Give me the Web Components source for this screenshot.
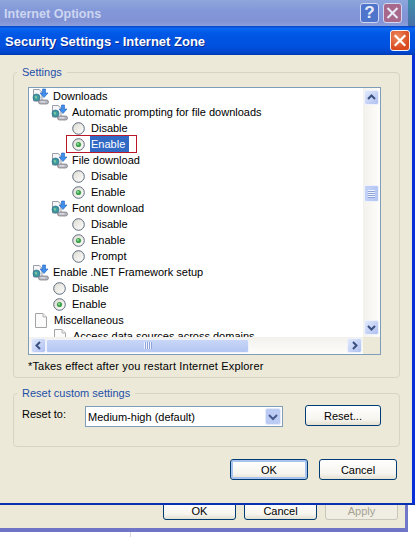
<!DOCTYPE html>
<html lang="en">
<head>
<meta charset="utf-8">
<title>Security Settings</title>
<style>
html,body{margin:0;padding:0;background:#fff;overflow:hidden}
body{width:415px;height:537px;font:11px/16px "Liberation Sans",Arial,sans-serif;color:#000}
</style>
</head>
<body>
<xp-desktop>
  <xp-back-window title="Internet Options" slot="back">
    <xp-button w="73" h="19">OK</xp-button>
    <xp-button w="73" h="19">Cancel</xp-button>
    <xp-button w="73" h="19" disabled>Apply</xp-button>
  </xp-back-window>
  <xp-dialog title="Security Settings - Internet Zone" slot="front">
    <xp-group legend="Settings" style="height:306px">
      <xp-listbox>
        <xp-item kind="net" level="0">Downloads</xp-item>
        <xp-item kind="net" level="1">Automatic prompting for file downloads</xp-item>
        <xp-item kind="radio" level="2">Disable</xp-item>
        <xp-item kind="radio" level="2" checked selected>Enable</xp-item>
        <xp-item kind="net" level="1">File download</xp-item>
        <xp-item kind="radio" level="2">Disable</xp-item>
        <xp-item kind="radio" level="2" checked>Enable</xp-item>
        <xp-item kind="net" level="1">Font download</xp-item>
        <xp-item kind="radio" level="2">Disable</xp-item>
        <xp-item kind="radio" level="2" checked>Enable</xp-item>
        <xp-item kind="radio" level="2">Prompt</xp-item>
        <xp-item kind="net" level="0">Enable .NET Framework setup</xp-item>
        <xp-item kind="radio" level="1">Disable</xp-item>
        <xp-item kind="radio" level="1" checked>Enable</xp-item>
        <xp-item kind="doc" level="0">Miscellaneous</xp-item>
        <xp-item kind="doc" level="1">Access data sources across domains</xp-item>
      </xp-listbox>
      <xp-note>*Takes effect after you restart Internet Explorer</xp-note>
    </xp-group>
    <xp-group legend="Reset custom settings" style="height:54px;margin-top:15px">
      <xp-reset-row>
        <span>Reset to:</span>
        <xp-select>Medium-high (default)</xp-select>
        <xp-button w="76" h="21">Reset...</xp-button>
      </xp-reset-row>
    </xp-group>
    <xp-actions>
      <xp-button w="78" h="21" default>OK</xp-button>
      <xp-button w="78" h="21">Cancel</xp-button>
    </xp-actions>
  </xp-dialog>
</xp-desktop>
<script>
const def=(name,css,html)=>{
  customElements.define(name,class extends HTMLElement{
    constructor(){super();this.attachShadow({mode:'open'});}
    connectedCallback(){this.shadowRoot.innerHTML=`<style>${css}</style>${typeof html==='function'?html(this):html}`;}
  });
};
const attrTitle=el=>el.getAttribute('title')||'';

const closeGlyph=`<svg viewBox="0 0 20 20" width="100%" height="100%"><path d="M5 5 15 15M15 5 5 15" stroke="currentColor" stroke-width="2.4" stroke-linecap="square"/></svg>`;

def('xp-desktop',`
  :host{display:block;position:relative;width:415px;height:537px;background:#fff;overflow:hidden}
  .line{position:absolute;left:130px;top:532px;bottom:0;width:1px;background:#d8d8d8}
  .strip{position:absolute;right:0;top:0;width:7px;height:26px;background:linear-gradient(#3f8fa8,#4a6fa8)}
  .back{position:absolute;left:0;top:0}
  .front{position:absolute;left:0;top:26px}
`,`<div class="strip"></div><div class="line"></div>
   <div class="back"><slot name="back"></slot></div>
   <div class="front"><slot name="front"></slot></div>`);

def('xp-back-window',`
  :host{display:flex;flex-direction:column;width:408px;height:532px;box-sizing:border-box;background:#ece9d8;border-right:3px solid #6f78c8;border-bottom:4px solid #6f74c6}
  .bar{flex:none;height:26px;margin-right:-3px;display:flex;align-items:center;padding:0 6px 0 4px;box-sizing:border-box;gap:4px;
    background:linear-gradient(#8fa6dc 0,#8398d8 40%,#8292d4 80%,#8ba0dc 100%);color:#cdd6f0;font:bold 12.6px "Liberation Sans",sans-serif}
  .t{flex:1;padding-top:2px}
  .b{width:19px;height:20px;box-sizing:border-box;border:1px solid #cfd8f0;border-radius:3px;color:#e8ecf8}
  .h{background:#4f74cc;font:bold 17px/18px "Liberation Sans",sans-serif;text-align:center}
  .x{background:#a8688c;padding:0}
  .foot{flex:1;display:flex;justify-content:flex-end;align-items:flex-end;gap:8px;padding:0 7px 8px 0}
`,el=>`<div class="bar"><span class="t">${attrTitle(el)}</span><span class="b h">?</span><span class="b x">${closeGlyph}</span></div>
  <div class="foot"><slot></slot></div>`);

def('xp-dialog',`
  :host{display:flex;flex-direction:column;width:415px;height:479px;box-sizing:border-box;background:#ece9d8;border-right:3px solid #0831d9;border-bottom:2px solid #0831b0}
  .bar{flex:none;height:29px;display:flex;align-items:center;padding:0 5px 0 5px;margin-right:-3px;box-sizing:border-box;
    background:linear-gradient(#0a3fc0 0,#0a68f0 8%,#0058e6 25%,#0050de 70%,#0046cc 92%,#0038b0 100%);color:#fff;font:bold 13px "Liberation Sans",sans-serif;text-shadow:1px 1px 0 #0a2a90}
  .t{flex:1;padding-top:1px}
  .x{width:20px;height:21px;box-sizing:border-box;border:1px solid #f4f4f4;border-radius:3px;background:radial-gradient(circle at 35% 30%,#ee8a60,#d9491f 70%);color:#fff}
  .body{flex:1;display:flex;flex-direction:column;padding:17px 12px 0 13px}
`,el=>`<div class="bar"><span class="t">${attrTitle(el)}</span><span class="x">${closeGlyph}</span></div>
  <div class="body"><slot></slot></div>`);

def('xp-group',`
  :host{display:block;position:relative;box-sizing:border-box;border:1px solid #d8d4c2;border-radius:4px;flex:none}
  .legend{position:absolute;left:3px;top:-9px;background:#ece9d8;padding:0 5px;color:#1d4fa8;line-height:16px}
  .c{height:100%;display:flex;flex-direction:column;box-sizing:border-box;padding:14px 18px 0 14px}
`,el=>`<div class="legend">${el.getAttribute('legend')}</div><div class="c"><slot></slot></div>`);

const sbBtn=(d)=>`<svg width="15" height="15" viewBox="0 0 15 15"><defs><linearGradient id="g" x1="0" y1="0" x2="1" y2="1"><stop offset="0" stop-color="#e2eafc"/><stop offset="1" stop-color="#aebff0"/></linearGradient></defs><rect x=".5" y=".5" width="14" height="14" rx="2" fill="url(#g)" stroke="#eef2fd"/><path d="${d}" fill="none" stroke="#3a5080" stroke-width="2"/></svg>`;

def('xp-listbox',`
  :host{display:grid;grid-template-columns:1fr 17px;grid-template-rows:1fr 17px;height:268px;box-sizing:border-box;border:1px solid #7f9db9;background:#fff;flex:none}
  .list{overflow:hidden;min-width:0;background:#fff}
  .v{background:linear-gradient(90deg,#f3f1ec,#fdfdfb);display:flex;flex-direction:column;align-items:center;padding:2px 0;box-sizing:border-box}
  .h{background:linear-gradient(#f3f1ec,#fdfdfb);display:flex;align-items:center;padding:0 1px 0 2px;box-sizing:border-box;overflow:hidden}
  .corner{background:#ece9d8}
  .thumbV{margin-top:80px;width:15px;height:17px;box-sizing:border-box;border:1px solid #eef2fd;border-radius:2px;background:linear-gradient(90deg,#c4d2f6,#b4c6f2);display:flex;flex-direction:column;justify-content:center;align-items:center;gap:1px}
  .thumbV i{display:block;width:7px;height:1px;background:#eef2fd;box-shadow:0 1px 0 #8ea4d8}
  .thumbH{width:203px;height:14px;box-sizing:border-box;border:1px solid #eef2fd;border-radius:2px;background:linear-gradient(#c8d6f8,#b4c6f2);display:flex;justify-content:center;align-items:center;gap:1px}
  .thumbH i{display:block;width:1px;height:7px;background:#eef2fd;box-shadow:1px 0 0 #8ea4d8}
  .sp{flex:1}
  svg{flex:none}
`,`<div class="list"><slot></slot></div>
  <div class="v">${sbBtn('M4 9 7.5 5.5 11 9')}
    <div class="thumbV"><i></i><i></i><i></i><i></i></div><div class="sp"></div>
    ${sbBtn('M4 6 7.5 9.5 11 6')}</div>
  <div class="h">${sbBtn('M9 4 5.5 7.5 9 11')}
    <div class="thumbH"><i></i><i></i><i></i><i></i></div><div class="sp"></div>
    ${sbBtn('M6 4 9.5 7.5 6 11')}</div>
  <div class="corner"></div>`);

const netIcon=`<svg width="18" height="17" viewBox="0 0 18 17">
  <path d="M1.500 1.500H7L10 4V13H1.500Z" fill="#f6f6f8" stroke="#9a9eaa"/>
  <circle cx="4.500" cy="9.500" r="3.500" fill="#3f9aa0" stroke="#2c6f88" stroke-width=".7"/>
  <path d="M2.500 8.500c1-1 2-.5 2.500 0s0 2-1 2.500" fill="#7fc9a0"/>
  <path d="M10.500 1h3v4h2.500l-4 4.500-4-4.500h2.500z" fill="#3e8eea" stroke="#2563bf" stroke-width=".6"/>
  <rect x="6.500" y="12" width="10" height="4" rx="2" fill="#b4b4bc" stroke="#74747e" stroke-width=".7"/>
  <rect x="8.500" y="13.300" width="5" height="1.200" fill="#e4e4e8"/>
</svg>`;
const docIcon=`<svg width="14" height="17" viewBox="0 0 14 17">
  <path d="M1.500 1.500H9L12.500 5V15.500H1.500Z" fill="#fbfbfb" stroke="#a4a4a4"/>
  <path d="M9 1.500V5H12.500" fill="#eee" stroke="#b4b4b4"/>
</svg>`;
const radioIcon=c=>`<svg width="13" height="13" viewBox="0 0 13 13">
  <defs><linearGradient id="r" x1="0" y1="0" x2="1" y2="1"><stop offset="0" stop-color="#dcdad0"/><stop offset="1" stop-color="#fff"/></linearGradient></defs>
  <circle cx="6.500" cy="6.500" r="5.800" fill="url(#r)" stroke="#5d6b7e" stroke-width="1"/>
  ${c?'<circle cx="6.500" cy="6.500" r="2.600" fill="#3fa34d"/><circle cx="6" cy="6" r="1" fill="#9fe0a0"/>':''}
</svg>`;

def('xp-item',`
  :host{display:flex;align-items:center;height:16px;position:relative;white-space:nowrap}
  .ic{flex:none;display:flex;align-items:center;justify-content:center}
  :host([selected]) .t{background:#316ac5;color:#fff;width:38px;padding-left:1px;margin-left:-1px;line-height:16px}
  .mark{position:absolute;left:37px;top:-1px;width:71px;height:18px;box-sizing:border-box;border:1px solid #b8182a}
`,el=>{
  const k=el.getAttribute('kind'),l=+el.getAttribute('level');
  const pad=3+l*19;
  const isR=k==='radio';
  const ic=isR?radioIcon(el.hasAttribute('checked')):k==='net'?netIcon:docIcon;
  const icw=isR?13:k==='net'?18:14;
  const left=isR?pad+2:pad+(k==='doc'?2:0);
  const gap=isR?6:(k==='doc'?6:3);
  return `<style>:host{padding-left:${left}px}.ic{width:${icw}px;margin-right:${gap}px}</style>
    <span class="ic">${ic}</span><span class="t"><slot></slot></span>${el.hasAttribute('selected')?'<span class="mark"></span>':''}`;
});

def('xp-note',`:host{display:block;margin-top:3px;line-height:16px;white-space:nowrap;letter-spacing:.17px}`,`<slot></slot>`);

def('xp-reset-row',`
  :host{display:flex;align-items:flex-start;margin-left:-6px;margin-top:-3px}
  ::slotted(span){width:63px;flex:none;line-height:16px;margin-top:1px}
  ::slotted(xp-button){margin-left:22px}
`,`<slot></slot>`);

def('xp-select',`
  :host{display:flex;align-items:center;justify-content:space-between;flex:none;width:198px;height:21px;margin-top:1px;box-sizing:border-box;border:1px solid #7f9db9;background:#fff;padding:0 1px 0 2px;white-space:nowrap}
`,`<span><slot></slot></span><svg width="16" height="17" viewBox="0 0 16 17"><rect x=".5" y=".5" width="15" height="16" rx="2" fill="#bccbf4" stroke="#e4ebfc"/><path d="M4 7 8 11 12 7" fill="none" stroke="#44598c" stroke-width="2"/></svg>`);

def('xp-button',`
  :host{display:inline-flex;align-items:center;justify-content:center;flex:none;box-sizing:border-box;border:1px solid #003c74;border-radius:3px;background:linear-gradient(#fff 0,#f6f5ef 70%,#e4e0d2 100%);white-space:nowrap}
  :host([default]){box-shadow:inset 0 0 0 2px #a8c4ee}
  :host([disabled]){border-color:#c9c7ba;background:#f0eee2;color:#a4a294}
`,el=>`<style>:host{width:${el.getAttribute('w')}px;height:${el.getAttribute('h')}px}</style><slot></slot>`);

def('xp-actions',`
  :host{display:flex;justify-content:flex-end;gap:11px;margin-top:12px;margin-right:3px}
`,`<slot></slot>`);
</script>
</body>
</html>
